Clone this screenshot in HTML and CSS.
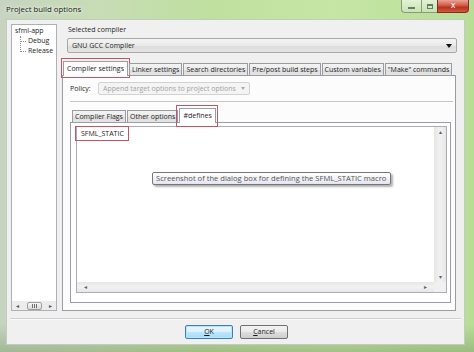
FILE: index.html
```html
<!DOCTYPE html>
<html>
<head>
<meta charset="utf-8">
<link rel="stylesheet" href="styles.css">
</head>
<body>
<div class="window">
  <div class="titlebar">
    <span class="title">Project build options</span>
    <div class="controls">
      <span class="ctl min"><i class="g-min"></i></span>
      <span class="ctl max"><i class="g-max"></i></span>
      <span class="ctl close">x</span>
    </div>
  </div>
  <div class="client">
    <div class="main">
      <div class="tree">
        <div class="tree-items">
          <div class="node root">sfml-app</div>
          <div class="children">
            <div class="node child">Debug</div>
            <div class="node child last">Release</div>
          </div>
        </div>
        <div class="tree-hscroll">
          <span class="arr">&#9666;</span>
          <span class="thumb"><i></i><i></i><i></i></span>
          <span class="arr">&#9656;</span>
        </div>
      </div>
      <div class="right">
        <div class="label">Selected compiler</div>
        <div class="combo"><span>GNU GCC Compiler</span><span class="drop"></span></div>
        <div class="tabs">
          <span class="tab active mark">Compiler settings</span>
          <span class="tab">Linker settings</span>
          <span class="tab">Search directories</span>
          <span class="tab">Pre/post build steps</span>
          <span class="tab">Custom variables</span>
          <span class="tab">"Make" commands</span>
        </div>
        <div class="panel">
          <div class="policy">
            <span class="policy-label">Policy:</span>
            <div class="combo disabled"><span>Append target options to project options</span><span class="drop"></span></div>
          </div>
          <div class="sep"></div>
          <div class="subtabs">
            <span class="tab">Compiler Flags</span>
            <span class="tab">Other options</span>
            <span class="tab active mark2">#defines</span>
          </div>
          <div class="subpanel">
            <div class="editor">
              <div class="edit-area"><span class="macro">SFML_STATIC</span></div>
              <div class="vscroll"><span class="sarr">&#9652;</span><span class="sarr">&#9662;</span></div>
              <div class="hscroll"><span class="sarr">&#9666;</span><span class="sarr">&#9656;</span></div>
              <div class="corner"></div>
            </div>
          </div>
        </div>
      </div>
    </div>
    <div class="hsep"></div>
    <div class="buttons">
      <span class="button default"><u>O</u>K</span>
      <span class="button"><u>C</u>ancel</span>
    </div>
  </div>
  <div class="tooltip">Screenshot of the dialog box for defining the SFML_STATIC macro</div>
</div>
</body>
</html>
```

FILE: styles.css
```css
* { box-sizing: border-box; }
html, body { margin: 0; padding: 0; }
body {
  width: 474px;
  height: 352px;
  overflow: hidden;
  font-family: "Open Sans", "Noto Sans", sans-serif;
  font-size: 7px;
  color: #1e1e1e;
}
.window {
  position: relative;
  width: 474px;
  height: 352px;
  display: flex;
  flex-direction: column;
  background:
    linear-gradient(180deg, rgba(255,255,255,0) 0%, rgba(255,255,255,0) 92%, rgba(120,150,100,0.45) 100%),
    linear-gradient(90deg, #c6d4c0 0%, #c8dcb6 20%, #bfe09f 45%, #c6e6a6 70%, #b8de96 100%);
}
.titlebar {
  height: 19px;
  display: flex;
  justify-content: space-between;
  align-items: flex-start;
  padding-left: 6px;
}
.title {
  font-size: 7.8px;
  line-height: 18px;
  color: #151515;
  text-shadow: 0 0 3px #f4fbef, 0 0 6px #f4fbef;
}
.controls {
  display: flex;
  margin-right: 5px;
}
.ctl {
  height: 13px;
  border: 1px solid #8b9a86;
  border-top: none;
  display: flex;
  align-items: center;
  justify-content: center;
  background: linear-gradient(180deg, rgba(255,255,255,0.55), rgba(220,232,210,0.35));
}
.ctl.min { width: 20px; border-radius: 0 0 0 4px; border-right: none; }
.ctl.max { width: 16px; border-right: none; }
.ctl.close {
  width: 32px;
  border-radius: 0 0 4px 0;
  border-color: #7a3028;
  background: linear-gradient(180deg, #e8a496 0%, #d45a48 45%, #b8321f 60%, #cf5a3e 100%);
  color: #fff;
  font-family: "DejaVu Sans", sans-serif;
  font-size: 8px;
  line-height: 12px;
}
.g-min { width: 7px; height: 2px; background: #6a7a6a; margin-top: 4px; display: block; }
.g-max { width: 6px; height: 5px; border: 1px solid #6a7a6a; border-top-width: 2px; display: block; }

.client {
  flex: 1;
  margin: 0 9px 7px 6px;
  background: #f0f0f0;
  border: 1px solid #c2ccbe;
  padding: 4px 8px 5px 4px;
  display: flex;
  flex-direction: column;
}
.main {
  height: 287px;
  display: flex;
  gap: 5px;
}
.tree {
  width: 46px;
  border: 1px solid #adb0b6;
  background: #fff;
  display: flex;
  flex-direction: column;
  justify-content: space-between;
  overflow: hidden;
}
.tree-items { padding: 1px 0 0 3px; }
.node { line-height: 10px; white-space: nowrap; }
.children {
  margin-left: 5px;
  position: relative;
}
.children::before {
  content: "";
  position: absolute;
  left: 0;
  top: 0;
  height: 16px;
  border-left: 1px dotted #8c8c8c;
}
.node.child { display: flex; align-items: center; }
.node.child::before {
  content: "";
  width: 6px;
  border-top: 1px dotted #8c8c8c;
  margin-right: 2px;
}
.tree-hscroll {
  height: 9px;
  background: #ececec;
  display: flex;
  align-items: center;
  justify-content: space-between;
  padding: 0 4px;
  color: #555;
  font-size: 6px;
}
.thumb {
  width: 15px;
  height: 8px;
  border: 1px solid #a0a0a0;
  border-radius: 2px;
  background: linear-gradient(180deg, #f6f6f6, #dadada);
  display: flex;
  align-items: center;
  justify-content: center;
  gap: 1px;
}
.thumb i { width: 1px; height: 4px; background: #707070; display: block; }

.right {
  flex: 1;
  display: flex;
  flex-direction: column;
}
.label {
  height: 14px;
  padding: 1px 0 0 6px;
  line-height: 10px;
}
.combo {
  height: 15px;
  margin-left: 5px;
  margin-right: -1px;
  border: 1px solid #a9a9a9;
  border-radius: 2px;
  background: linear-gradient(180deg, #f4f4f4 0%, #e9e9e9 50%, #dcdcdc 51%, #e4e4e4 100%);
  display: flex;
  align-items: center;
  justify-content: space-between;
  padding: 0 4px 0 4px;
  line-height: 10px;
}
.drop {
  width: 0;
  height: 0;
  border-left: 3px solid transparent;
  border-right: 3px solid transparent;
  border-top: 4px solid #111;
}
.tabs {
  margin-top: 8px;
  height: 14px;
  display: flex;
  align-items: flex-end;
  gap: 1px;
  padding-left: 1px;
  position: relative;
  z-index: 1;
}
.tab {
  height: 12px;
  border: 1px solid #999ca3;
  border-bottom: none;
  background: linear-gradient(180deg, #f3f3f3 0%, #ebebeb 50%, #dcdcdc 51%, #e6e6e6 100%);
  padding: 0 2px;
  line-height: 11px;
  white-space: nowrap;
  position: relative;
}
.tab.active {
  height: 15px;
  margin-bottom: -1px;
  background: #fcfcfc;
  line-height: 13px;
  padding: 0 3px;
}
.mark::after {
  content: "";
  position: absolute;
  left: -3px;
  top: -4px;
  right: -3px;
  bottom: -2px;
  border: 1.5px solid #c25666;
}
.mark2::after {
  content: "";
  position: absolute;
  left: -4px;
  top: -4px;
  right: -3px;
  bottom: -4px;
  border: 1.5px solid #c25666;
}
.panel {
  flex: 1;
  border: 1px solid #999ca3;
  background: #fcfcfc;
  padding: 6px 4px 7px 7px;
  display: flex;
  flex-direction: column;
}
.policy {
  height: 13px;
  display: flex;
  align-items: center;
}
.policy-label { width: 28px; line-height: 10px; }
.combo.disabled {
  width: 152px;
  height: 13px;
  margin: 0;
  border-color: #d2d2d2;
  background: #f4f4f4;
  color: #a3a3a3;
  padding: 0 4px;
}
.combo.disabled .drop { border-top-color: #a8a8a8; border-left-width: 2px; border-right-width: 2px; border-top-width: 3px; }
.sep {
  margin-top: 6px;
  height: 2px;
  border-top: 1px solid #c4c4c4;
  border-bottom: 1px solid #ffffff;
  margin-right: -2px;
}
.subtabs {
  margin-top: 4px;
  height: 15px;
  display: flex;
  align-items: flex-end;
  gap: 1px;
  padding-left: 2px;
  position: relative;
  z-index: 1;
}
.subtabs .tab.active { background: #fff; }
.subpanel {
  flex: 1;
  border: 1px solid #999ca3;
  background: #fff;
  padding: 3px 3px 9px 5px;
  display: flex;
}
.editor {
  flex: 1;
  border: 1px solid #abadb3;
  background: #fff;
  display: grid;
  grid-template-columns: 1fr 12px;
  grid-template-rows: 1fr 10px;
}
.edit-area { padding: 0; }
.macro {
  display: inline-block;
  margin: -1px 0 0 -2px;
  height: 15px;
  padding: 0 4px 0 5px;
  line-height: 13px;
  border: 1.5px solid #c25666;
  color: #222;
}
.vscroll {
  background: linear-gradient(90deg, #e6e6e6, #f2f2f2, #e6e6e6);
  display: flex;
  flex-direction: column;
  justify-content: space-between;
  align-items: center;
  color: #606060;
  font-size: 6px;
  line-height: 10px;
}
.hscroll {
  background: linear-gradient(180deg, #e6e6e6, #f2f2f2, #e6e6e6);
  display: flex;
  justify-content: space-between;
  align-items: center;
  padding: 0 7px 0 7px;
  color: #606060;
  font-size: 6px;
}
.corner { background: #f0f0f0; }

.hsep {
  margin: 7px -5px 0 -1px;
  height: 2px;
  border-top: 1px solid #d0d0d0;
  border-bottom: 1px solid #fbfbfb;
  flex: none;
}
.buttons {
  margin-top: 5px;
  height: 14px;
  display: flex;
  justify-content: center;
  gap: 7px;
  padding-left: 6px;
}
.button {
  width: 48px;
  height: 14px;
  border: 1px solid #707070;
  border-radius: 2px;
  background: linear-gradient(180deg, #f2f2f2 0%, #ebebeb 50%, #dddddd 51%, #cfcfcf 100%);
  text-align: center;
  line-height: 12px;
  color: #1a1a1a;
}
.button.default {
  border-color: #3c7fb1;
  background: linear-gradient(180deg, #eaf6fd 0%, #d9f0fc 50%, #bee6fd 51%, #a7d9f5 100%);
  box-shadow: inset 0 0 0 1px #b9e3fa;
}
.tooltip {
  position: absolute;
  left: 152px;
  top: 172px;
  width: 239px;
  height: 13px;
  border: 1px solid #767676;
  border-radius: 2px;
  background: linear-gradient(180deg, #ffffff, #e4e5f0);
  box-shadow: 2px 2px 2px rgba(0,0,0,0.3);
  color: #555555;
  padding: 0 3px;
  font-size: 7.6px;
  line-height: 11px;
  white-space: nowrap;
}
```
